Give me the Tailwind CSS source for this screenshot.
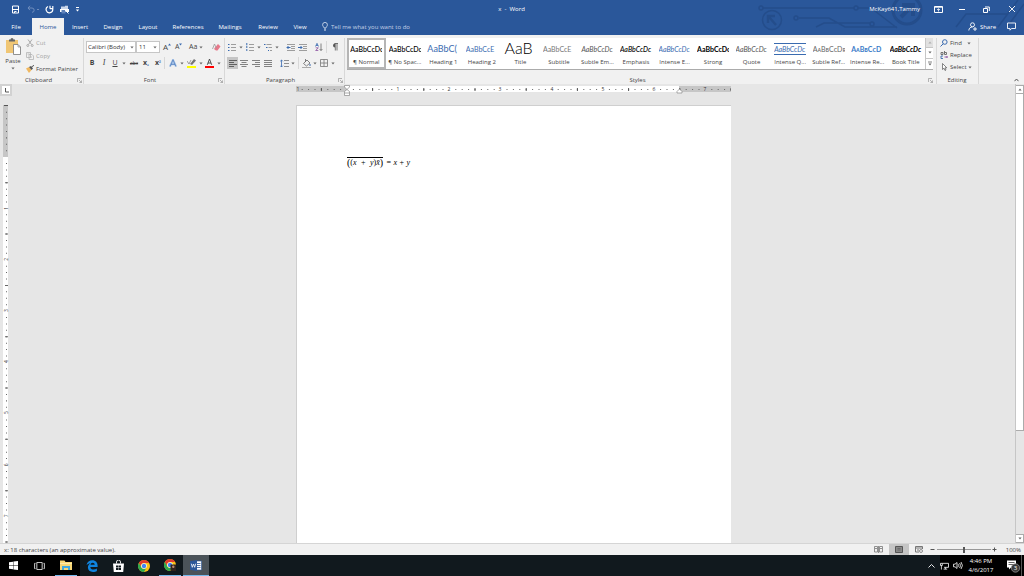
<!DOCTYPE html>
<html lang="en">
<head>
    <meta charset="UTF-8">
    <meta name="viewport" content="width=device-width, initial-scale=1.0">
    <title>x - Word</title>
    <script src="https://cdn.jsdelivr.net/npm/@tailwindcss/browser@4"></script>
</head>
<body class="h-screen flex flex-col overflow-hidden bg-[#e6e6e6] text-[#444] text-[6px] leading-[8px] font-['Open_Sans','Noto_Sans',sans-serif]">
    <!-- shared icons -->
    <svg class="hidden">
        <symbol id="caret" viewBox="0 0 4 3"><path d="M0.4 0.6h3.2L2 2.4z" fill="#666"/></symbol>
        <symbol id="launcher" viewBox="0 0 5 5"><path d="M0.5 4V0.5H4M2 2l2.4 2.4M4.5 2.4v2.1H2.4" fill="none" stroke="#888" stroke-width=".6"/></symbol>
        <symbol id="chrome" viewBox="0 0 12 12">
            <circle cx="6" cy="6" r="6" fill="#fbc116"/>
            <path d="M.8 3A6 6 0 0 1 11.2 3H6a3 3 0 0 0-2.6 4.5z" fill="#e33b2e"/>
            <path d="M.8 3A6 6 0 0 0 6 12l2.6-4.5A3 3 0 0 1 3.4 7.5z" fill="#2da94f"/>
            <circle cx="6" cy="6" r="2.8" fill="#fff"/><circle cx="6" cy="6" r="2.2" fill="#4285f4"/>
        </symbol>
    </svg>

    <header class="relative bg-[#2a579a] text-white">
        <svg class="absolute right-0 top-0 w-[266px] h-[35px]" viewBox="758 0 266 35" fill="none" stroke="#244d8b" stroke-width="1.5">
            <path d="M763 8h91M858 8h13l26 20M799 18h30l16 9h52M816 27l8-4h46"/>
            <circle cx="761" cy="8" r="2"/><circle cx="856" cy="8" r="2"/><circle cx="796" cy="18" r="2"/><circle cx="872" cy="24" r="2"/>
            <circle cx="772" cy="20" r="9.5"/><path d="M776 25l-7-8M768 23v-7h7" stroke-width="2.4"/>
            <circle cx="907" cy="10" r="14" stroke-width="3"/><path d="M901 17l10-10M902 5h11v11" stroke-width="4"/>
            <path d="M956 27l10-13h42M998 27l20-27M1007 27l17-23"/>
        </svg>
        <div class="relative flex items-center h-[18px]">
            <div class="flex flex-1 items-center pl-[11px] gap-[6px]">
                <button aria-label="Save" class="w-3"><svg class="size-[9px]" viewBox="0 0 9 9" fill="none" stroke="#fff"><path d="M1.5 1h6v7h-6zM1.5 4.5h6M3.5 8V6.500h2"/></svg></button>
                <button aria-label="Undo" class="flex items-center gap-[2px] -ml-[2px]"><svg class="size-[8px]" viewBox="0 0 8 8" fill="none" stroke="#6f8dbd"><path d="M3 .8L1 3l2 2.200M1 3h4a2 2 0 0 1 0 4.300"/></svg><span class="w-[2px] h-px bg-[#6f8dbd]"></span></button>
                <button aria-label="Repeat"><svg class="size-[9px]" viewBox="0 0 9 9" fill="none" stroke="#fff" stroke-width="1.2"><path d="M3 1.500A3.300 3.300 0 1 0 7.700 4M5 .8v3M5 3.600h2.800V1"/></svg></button>
                <button aria-label="Quick print"><svg class="size-[9px]" viewBox="0 0 9 9"><path d="M1 1.500h4V4H1zM5 0.800h3V4H5z" fill="#c9d6ea"/><path d="M0 4h9v3H0z" fill="#fff"/><path d="M1.500 5h4v3.500h-4z" fill="#5f82ba"/><path d="M5 5l3.500 3.500" stroke="#fff"/></svg></button>
                <button aria-label="Customize toolbar"><svg class="w-[5px] h-[7px]" viewBox="0 0 5 7"><path d="M1 1.500h3" stroke="#fff"/><path d="M.8 3.500h3.400L2.500 5.400z" fill="#fff"/></svg></button>
            </div>
            <h1 class="-ml-1">x&nbsp; -&nbsp; Word</h1>
            <div class="flex flex-1 items-center justify-end pr-2">
                <span class="mr-[14px]">McKay641,Tammy</span>
                <button aria-label="Ribbon options" class="mr-4"><svg class="w-[9px] h-[7px]" viewBox="0 0 9 7"><path d="M.5 .5h8v6h-8z" fill="none" stroke="#fff"/><path d="M.5 1.200h8" stroke="#fff"/><path d="M4.500 5.500V3M3 4l1.500-1.300L6 4" fill="none" stroke="#fff" stroke-width=".8"/></svg></button>
                <button aria-label="Minimize" class="mr-[18px]"><svg class="w-[6px] h-[7px]" viewBox="0 0 6 7"><path d="M0 3.500h6" stroke="#fff"/></svg></button>
                <button aria-label="Restore" class="mr-[18px]"><svg class="w-[7px] h-[7px]" viewBox="0 0 7 7" fill="none" stroke="#fff"><path d="M.5 2.500h4v4h-4zM2 1h4.300v4"/></svg></button>
                <button aria-label="Close"><svg class="w-[8px] h-[8px]" viewBox="0 0 8 8"><path d="M1 1l6 6M7 1L1 7" stroke="#fff" stroke-width=".9"/></svg></button>
            </div>
        </div>
        <nav class="relative flex items-stretch h-[17px] text-center">
            <button class="w-8">File</button>
            <button class="w-8 bg-[#f1f1f1] text-[#2a579a]">Home</button>
            <button class="w-8">Insert</button>
            <button class="w-[34px]">Design</button>
            <button class="w-9">Layout</button>
            <button class="w-11">References</button>
            <button class="w-10">Mailings</button>
            <button class="w-9">Review</button>
            <button class="w-7">View</button>
            <label class="flex items-center pl-2 gap-[3px]">
                <svg class="w-[6px] h-[9px]" viewBox="0 0 6 9" fill="none" stroke="#dde6f3" stroke-width=".8"><path d="M2 6C2 4.800.6 4.400.6 2.800a2.400 2.400 0 0 1 4.800 0C5.400 4.400 4 4.800 4 6zM2 7.200h2M2.300 8.400h1.400"/></svg>
                <input class="w-24 text-white placeholder:text-[#c3d0e5] outline-none" type="text" aria-label="Tell me" placeholder="Tell me what you want to do">
            </label>
            <div class="flex flex-1 items-center justify-end pr-2">
                <button class="flex items-center gap-[3px] mr-[11px]"><svg class="size-[9px]" viewBox="0 0 9 9" fill="none" stroke="#fff" stroke-width=".9"><circle cx="4.500" cy="2.800" r="2"/><path d="M.8 8.500C1 6 2.500 5 4.500 5M5 7h4M7 5v4"/></svg>Share</button>
                <button aria-label="Comments"><svg class="size-[9px]" viewBox="0 0 9 9" fill="none" stroke="#fff" stroke-width=".9"><path d="M.5 1h8v5.500h-4L3 8.200V6.500H.5z"/></svg></button>
            </div>
        </nav>
    </header>

    <!-- ribbon -->
    <section class="flex h-[49px] bg-[#f1f1f1] pt-[3px]">
        <div class="flex flex-col w-[84px] border-r border-[#d8d8d8]">
            <div class="flex flex-1">
                <button class="flex flex-col items-center w-[26px]">
                    <svg class="w-[15px] h-[17px]" viewBox="0 0 15 17"><path d="M0 2h12v13H0z" fill="#f0c674"/><path d="M3 3.500V1.500h1.500a1.500 1.500 0 0 1 3 0H9v2z" fill="#666"/><path d="M7.500 6.500h4.500l2.500 2.500v7.500h-7z" fill="#fff" stroke="#777" stroke-width=".8"/><path d="M12 6.500V9h2.500" fill="none" stroke="#777" stroke-width=".6"/></svg>
                    <span class="mt-[2px]">Paste</span>
                    <svg class="w-1 h-[3px] mt-[2px]"><use href="#caret"/></svg>
                </button>
                <div class="flex flex-col justify-between pt-px pb-[3px]">
                    <button class="flex items-center gap-[2px] text-[#a5a5a5]"><svg class="size-[8px]" viewBox="0 0 8 8" fill="none" stroke="#aaa"><path d="M2 .5l3.500 5M6 .5L2.500 5.500"/><circle cx="1.800" cy="6.500" r="1"/><circle cx="6.200" cy="6.500" r="1"/></svg>Cut</button>
                    <button class="flex items-center gap-[2px] text-[#a5a5a5]"><svg class="size-[8px]" viewBox="0 0 8 8" fill="#f1f1f1" stroke="#b5b5b5" stroke-width=".8"><path d="M.5 .5h4v5h-4zM3 2.500h3l1.500 1.500v3.500H3zM1.500 2h2M4 5h2"/></svg>Copy</button>
                    <button class="flex items-center gap-[2px]"><svg class="size-[8px]" viewBox="0 0 8 8"><path d="M0 3.500L3 2l2.500 3L3 8z" fill="#f0b860"/><path d="M3 2l2-1 2 2.500-1.500 1.500z" fill="#555"/><path d="M5.500 2L8 .3" stroke="#555"/></svg>Format Painter</button>
                </div>
            </div>
            <div class="flex items-center"><span class="flex-1 text-center">Clipboard</span><button aria-label="Clipboard settings" class="pr-[1px]"><svg class="size-[5px]"><use href="#launcher"/></svg></button></div>
        </div>

        <div class="flex flex-col w-[141px] border-r border-[#d8d8d8] pl-[2px]">
            <div class="flex items-center h-[18px]">
                <label class="relative flex"><select aria-label="Font" class="appearance-none w-[50px] h-3 bg-white border border-[#c6c6c6] pl-px text-[#333]"><option>Calibri (Body)</option></select><svg class="absolute right-[2px] top-[5px] w-1 h-[3px]"><use href="#caret"/></svg></label>
                <label class="relative flex"><select aria-label="Font size" class="appearance-none w-6 h-3 bg-white border border-[#c6c6c6] pl-[2px] text-[#333]"><option>11</option></select><svg class="absolute right-[3px] top-[5px] w-1 h-[3px]"><use href="#caret"/></svg></label>
                <button aria-label="Grow font" class="flex w-3 ml-[3px] text-[8px]">A<svg class="size-[3px]" viewBox="0 0 3 3"><path d="M0 2.500L1.500.5 3 2.500z" fill="#3a6bb0"/></svg></button>
                <button aria-label="Shrink font" class="flex items-end w-3 text-[7px]">A<svg class="size-[3px] self-start" viewBox="0 0 3 3"><path d="M0 .5h3L1.500 2.500z" fill="#3a6bb0"/></svg></button>
                <button aria-label="Change case" class="flex items-center gap-[2px] ml-[2px] w-[23px] text-[7px]">Aa<svg class="w-1 h-[3px]"><use href="#caret"/></svg></button>
                <button aria-label="Clear formatting"><svg class="w-[9px] h-[9px]" viewBox="0 0 9 9"><path d="M3 4.500L6 1l2.500 2.500-3 4H4L2 6z" fill="#e8788a"/><path d="M.5 6L2.500 1l2 4.500" stroke="#999" fill="none" stroke-width=".8"/></svg></button>
            </div>
            <div class="flex items-center h-[14px]">
                <button class="w-3 font-bold text-[7px]">B</button>
                <button class="w-3 italic text-[8px] font-['Liberation_Serif',serif]">I</button>
                <button class="w-[10px] underline text-[7px]">U</button>
                <button aria-label="Underline styles" class="flex w-2 justify-center"><svg class="w-1 h-[3px]"><use href="#caret"/></svg></button>
                <button class="w-3 line-through text-[5px]">abc</button>
                <button aria-label="Subscript" class="w-3 font-bold text-[7px]">x<span class="text-[5px] text-[#3a6bb0]">₂</span></button>
                <button aria-label="Superscript" class="w-3 font-bold text-[7px]">x<span class="text-[5px] text-[#3a6bb0]">²</span></button>
                <span class="w-px h-3 bg-[#d8d8d8] mr-1"></span>
                <button aria-label="Text effects" class="flex items-center gap-[3px] w-[18px]"><svg class="size-[8px]" viewBox="0 0 8 8" fill="none"><path d="M1 7.500L4 .8l3 6.700M2 5.300h4" stroke="#a9c5ea" stroke-width="2"/><path d="M1 7.500L4 .8l3 6.700M2 5.300h4" stroke="#3a6bb0" stroke-width=".6"/></svg><svg class="w-1 h-[3px]"><use href="#caret"/></svg></button>
                <button aria-label="Highlight" class="flex items-center gap-[3px] w-[18px]"><svg class="w-[9px] h-[10px]" viewBox="0 0 9 10"><path d="M0 8h9v2H0z" fill="#ff0"/><path d="M3 6l4-5 2 1.500-4 4.500z" fill="#777"/><path d="M0 3l2 3 2-4" fill="none" stroke="#777" stroke-width=".7"/></svg><svg class="w-1 h-[3px]"><use href="#caret"/></svg></button>
                <button aria-label="Font color" class="flex items-center gap-[3px]"><svg class="w-[9px] h-[10px]" viewBox="0 0 9 10"><path d="M0 8h9v2H0z" fill="red"/><path d="M2.300 6.800L4.500 1l2.200 5.800M3 5h3" fill="none" stroke="#444" stroke-width=".9"/></svg><svg class="w-1 h-[3px]"><use href="#caret"/></svg></button>
            </div>
            <div class="flex items-center mt-auto"><span class="flex-1 text-center pr-1">Font</span><button aria-label="Font settings" class="pr-[1px]"><svg class="size-[5px]"><use href="#launcher"/></svg></button></div>
        </div>

        <div class="flex flex-col w-[120px] border-r border-[#d8d8d8] pl-[2px]">
            <div class="flex items-center h-[18px] pl-px">
                <button aria-label="Bullets" class="flex items-center gap-[3px] w-[18px]"><svg class="size-[8px]" viewBox="0 0 8 8"><path d="M0 1.500h1.500M0 4.500h1.500M0 7.500h1.500" stroke="#3a6bb0"/><path d="M3 1.500h5M3 4.500h5M3 7.500h5" stroke="#888" stroke-width=".8"/></svg><svg class="w-1 h-[3px]"><use href="#caret"/></svg></button>
                <button aria-label="Numbering" class="flex items-center gap-[3px] w-[18px]"><svg class="size-[8px]" viewBox="0 0 8 8"><path d="M.8 0v2.300M.8 3v2M.8 6v2" stroke="#3a6bb0"/><path d="M3 1.500h5M3 4.500h5M3 7.500h5" stroke="#888" stroke-width=".8"/></svg><svg class="w-1 h-[3px]"><use href="#caret"/></svg></button>
                <button aria-label="Multilevel list" class="flex items-center gap-[3px] w-[22px]"><svg class="size-[8px]" viewBox="0 0 8 8"><path d="M0 1.500h1.500M2 4.500h1.500M4 7.500h1" stroke="#3a6bb0"/><path d="M2.500 1.500h5M4.500 4.500H8M6 7.500h2" stroke="#888" stroke-width=".8"/></svg><svg class="w-1 h-[3px]"><use href="#caret"/></svg></button>
                <button aria-label="Decrease indent" class="w-3"><svg class="w-[9px] h-[8px]" viewBox="0 0 9 8"><path d="M1 1.500h8M5 3.500h4M5 5.500h4M1 7.500h8" stroke="#888" stroke-width=".8"/><path d="M4.500 4.500H1M2.500 3L1 4.500 2.500 6" fill="none" stroke="#3a6bb0"/></svg></button>
                <button aria-label="Increase indent" class="w-[17px]"><svg class="w-[9px] h-[8px]" viewBox="0 0 9 8"><path d="M1 1.500h8M5 3.500h4M5 5.500h4M1 7.500h8" stroke="#888" stroke-width=".8"/><path d="M0 4.500h4M2.500 3L4 4.500 2.500 6" fill="none" stroke="#3a6bb0"/></svg></button>
                <button aria-label="Sort" class="w-[11px]"><svg class="size-[8px]" viewBox="0 0 8 8" fill="none" stroke-width=".8"><path d="M.5 3.500L2 .3l1.500 3.200M1 2.500h2" stroke="#3a6bb0"/><path d="M.7 4.800h2.600L.7 7.500h2.600" stroke="#8a4fa0"/><path d="M6 .5v7M4.600 6L6 7.500 7.400 6" stroke="#666"/></svg></button>
                <span class="w-px h-3 bg-[#d8d8d8] mr-[5px]"></span>
                <button aria-label="Show marks"><svg class="w-[6px] h-[8px]" viewBox="0 0 6 8"><path d="M3 .5a2 2 0 0 0 0 4z" fill="#555"/><path d="M2.500 .5H6M3.300 .5v7M5 .5v7" stroke="#555" stroke-width=".8"/></svg></button>
            </div>
            <div class="flex items-center h-[14px]">
                <button aria-label="Align left" class="grid place-items-center w-[11px] h-3 bg-[#c5c5c5]"><svg class="size-[8px]" viewBox="0 0 8 8" stroke="#555" stroke-width=".9"><path d="M0 1.500h8M0 3.500h5M0 5.500h8M0 7.500h5"/></svg></button>
                <button aria-label="Center" class="grid place-items-center w-3 h-3"><svg class="size-[8px]" viewBox="0 0 8 8" stroke="#666" stroke-width=".8"><path d="M0 1.500h8M1.500 3.500h5M0 5.500h8M1.500 7.500h5"/></svg></button>
                <button aria-label="Align right" class="grid place-items-center w-3 h-3"><svg class="size-[8px]" viewBox="0 0 8 8" stroke="#666" stroke-width=".8"><path d="M0 1.500h8M3 3.500h5M0 5.500h8M3 7.500h5"/></svg></button>
                <button aria-label="Justify" class="grid place-items-center w-3 h-3"><svg class="size-[8px]" viewBox="0 0 8 8" stroke="#666" stroke-width=".8"><path d="M0 1.500h8M0 3.500h8M0 5.500h8M0 7.500h8"/></svg></button>
                <button aria-label="Line spacing" class="flex items-center gap-[2px] ml-[6px] w-[18px]"><svg class="size-[9px]" viewBox="0 0 9 9" fill="none"><path d="M4 1.500h5M4 4.500h5M4 7.500h5" stroke="#777" stroke-width=".8"/><path d="M1.500 1v7M.2 2.300L1.500 1l1.300 1.300M.2 6.700L1.500 8l1.300-1.300" stroke="#3a6bb0" stroke-width=".8"/></svg><svg class="w-1 h-[3px]"><use href="#caret"/></svg></button>
                <span class="w-px h-3 bg-[#d8d8d8] mr-[3px]"></span>
                <button aria-label="Shading" class="flex items-center gap-[2px] w-[18px]"><svg class="size-[9px]" viewBox="0 0 9 9" fill="none"><path d="M1.500 4.500L5 1l3 3-3.500 3zM3.500 0v3" stroke="#666" stroke-width=".8"/><path d="M8 5v2" stroke="#3a6bb0"/><path d="M0 8.500h9" stroke="#aaa"/></svg><svg class="w-1 h-[3px]"><use href="#caret"/></svg></button>
                <button aria-label="Borders" class="flex items-center gap-[3px]"><svg class="size-[8px]" viewBox="0 0 8 8" fill="none" stroke="#777" stroke-width=".8"><path d="M.5 .5h7v7h-7zM4 .5v7M.5 4h7"/></svg><svg class="w-1 h-[3px]"><use href="#caret"/></svg></button>
            </div>
            <div class="flex items-center mt-auto"><span class="flex-1 text-center pr-1">Paragraph</span><button aria-label="Paragraph settings" class="pr-[1px]"><svg class="size-[5px]"><use href="#launcher"/></svg></button></div>
        </div>

        <div class="flex flex-col flex-1 min-w-0 border-r border-[#d8d8d8] pl-[2px] pr-[3px]">
            <div class="flex h-8 bg-white border-b border-[#ababab]">
                <div class="grid grid-cols-[repeat(15,minmax(0,1fr))] flex-1 [&>button]:flex [&>button]:flex-col [&>button]:items-center [&>button]:overflow-hidden [&>button]:whitespace-nowrap [&_b]:flex [&_b]:items-center [&_b]:w-8 [&_b]:h-5 [&_b]:pt-[2px] [&_b]:overflow-hidden [&_b]:font-['Lato',sans-serif] [&_b]:text-[7px]">
                    <button class="outline-2 -outline-offset-2 outline-[#b5b5b5]"><b class="font-medium text-black">AaBbCcDc</b><span>¶ Normal</span></button>
                    <button><b class="font-medium text-black">AaBbCcDc</b><span>¶ No Spac...</span></button>
                    <button><b class="font-normal text-[#3a6bb0] text-[9px]!">AaBbC(</b><span>Heading 1</span></button>
                    <button><b class="font-normal text-[#3a6bb0]">AaBbCcE</b><span>Heading 2</span></button>
                    <button><b class="font-light text-black text-[16px]! pt-0! leading-[18px]">AaB</b><span>Title</span></button>
                    <button><b class="font-normal text-[#777]">AaBbCcE</b><span>Subtitle</span></button>
                    <button><b class="font-normal italic text-[#555]">AaBbCcDc</b><span>Subtle Em...</span></button>
                    <button><b class="font-medium italic text-black">AaBbCcDc</b><span>Emphasis</span></button>
                    <button><b class="font-normal italic text-[#3a6bb0]">AaBbCcDc</b><span>Intense E...</span></button>
                    <button><b class="text-black">AaBbCcDc</b><span>Strong</span></button>
                    <button><b class="font-normal italic text-[#555]">AaBbCcDc</b><span>Quote</span></button>
                    <button><b class="font-normal italic text-[#3a6bb0] h-3! pt-0! mt-[5px] mb-[3px] border-y border-[#3a6bb0]">AaBbCcDc</b><span>Intense Q...</span></button>
                    <button><b class="font-normal text-[#666]">AᴀBʙCᴄDʀ</b><span>Subtle Ref...</span></button>
                    <button><b class="font-bold text-[#3a7bc8]">AᴀBʙCᴄD</b><span>Intense Re...</span></button>
                    <button><b class="font-bold italic text-black">AaBbCcDc</b><span>Book Title</span></button>
                </div>
                <div class="grid grid-rows-3 w-2 border-l border-[#c6c6c6] divide-y divide-[#c6c6c6] [&>button]:grid [&>button]:place-items-center">
                    <button aria-label="Scroll up" class="bg-[#e1e1e1]"><svg class="w-1 h-[3px] rotate-180 opacity-40"><use href="#caret"/></svg></button>
                    <button aria-label="Scroll down"><svg class="w-1 h-[3px]"><use href="#caret"/></svg></button>
                    <button aria-label="More styles"><svg class="w-1 h-[5px]" viewBox="0 0 4 5"><path d="M0 1h4" stroke="#666" stroke-width=".8"/><path d="M.4 2.400h3.200L2 4.400z" fill="#666"/></svg></button>
                </div>
            </div>
            <div class="flex items-center mt-auto"><span class="flex-1 text-center">Styles</span><button aria-label="Styles settings"><svg class="size-[5px]"><use href="#launcher"/></svg></button></div>
        </div>

        <div class="flex flex-col w-[42px] border-r border-[#d8d8d8] pl-[3px] pt-px">
            <button class="flex items-center gap-[2px] h-2"><svg class="size-[8px]" viewBox="0 0 8 8" fill="none" stroke="#3a6bb0"><circle cx="4.800" cy="3" r="2.300"/><path d="M3.200 4.800L.5 7.500"/></svg>Find<svg class="w-1 h-[3px] ml-[3px]"><use href="#caret"/></svg></button>
            <button class="flex items-center gap-[2px] h-2 mt-1"><svg class="size-[8px]" viewBox="0 0 8 8" fill="none" stroke-width=".9"><path d="M1 1.500h2v2H1zM4.500 0v3.500h2v-2h-2" stroke="#666"/><path d="M3 5H1v2.500h2M.5 4.500" stroke="#3a6bb0"/><path d="M4.500 6h3M6.500 5l1 1-1 1" stroke="#8a4fa0"/></svg>Replace</button>
            <button class="flex items-center gap-[2px] h-2 mt-1"><svg class="size-[8px]" viewBox="0 0 8 8"><path d="M2.500 .5v6L4 5.200l1 2.300 1-.5-1-2.200h1.800z" fill="#fff" stroke="#555" stroke-width=".7"/></svg>Select<svg class="w-1 h-[3px] -ml-px"><use href="#caret"/></svg></button>
            <span class="mt-auto text-center pr-1">Editing</span>
        </div>
        <div class="flex w-[45px] items-end justify-end pr-[5px]">
            <button aria-label="Collapse ribbon"><svg class="w-[5px] h-[8px]" viewBox="0 0 5 8"><path d="M.5 5.200L2.500 3l2 2.200" fill="none" stroke="#555"/></svg></button>
        </div>
    </section>

    <!-- document area -->
    <main class="flex flex-1 min-h-0">
        <div class="flex flex-col w-3 overflow-hidden">
            <button aria-label="Tab stop" class="grid place-items-center w-3 h-3 bg-white border-2 border-[#d2d2d2]"><svg class="size-[5px]" viewBox="0 0 5 5"><path d="M1.500 0v4H5" fill="none" stroke="#555"/></svg></button>
            <!-- 51.2 units to the inch, seven eighth-inch dots between numbers -->
            <svg class="w-[6px] ml-[3px] mt-[9px] flex-1 min-h-0" viewBox="3 106 6 437" preserveAspectRatio="xMinYMin slice">
                <path d="M3 106h5v52H3z" fill="#c6c6c6"/><path d="M3 158h5v700H3z" fill="#fff"/>
                <path d="M6.500 112.700V858" stroke="#666" stroke-dasharray="1 5.400 1 5.400 1 5.400 1 5.400 1 5.400 1 5.400 1 11.800"/>
                <path d="M6.500 183.100V858" stroke="#666" stroke-width="3" stroke-dasharray="1 50.200"/>
                <path d="M4 106.500h4" stroke="#555"/>
                <g fill="#333" font-size="5" text-anchor="middle">
                    <text transform="translate(8 209) rotate(-90)">1</text>
                    <text transform="translate(8 260) rotate(-90)">2</text>
                    <text transform="translate(8 311) rotate(-90)">3</text>
                    <text transform="translate(8 362) rotate(-90)">4</text>
                    <text transform="translate(8 413) rotate(-90)">5</text>
                    <text transform="translate(8 465) rotate(-90)">6</text>
                    <text transform="translate(8 516) rotate(-90)">7</text>
                </g>
            </svg>
        </div>
        <div class="flex flex-1 flex-col items-center min-w-0">
            <svg class="w-[435px] h-[12px] mt-px mb-2 shrink-0" viewBox="296 86 435 12">
                <path d="M296 87h51v6h-51zM679 87h52v6h-52z" fill="#c6c6c6"/><path d="M347 87h332v6H347z" fill="#fff"/>
                <path d="M301.700 90.500H731" stroke="#666" stroke-dasharray="1 5.400 1 5.400 1 5.400 1 5.400 1 5.400 1 5.400 1 11.800"/>
                <path d="M320.900 90.500H731" stroke="#555" stroke-width="3" stroke-dasharray="1 50.200"/>
                <g fill="#333" font-size="5" text-anchor="middle">
                    <text x="298" y="92">1</text><text x="398" y="92">1</text><text x="449" y="92">2</text><text x="500" y="92">3</text><text x="552" y="92">4</text><text x="603" y="92">5</text><text x="654" y="92">6</text><text x="705" y="92">7</text>
                </g>
                <path d="M344.500 86.500h5V88L347 90.500 344.500 88zM347 90.500l2.500 2v4h-5v-4zM344.500 94h5M679.500 90l2.500 2.500v1.500h-5v-1.500z" fill="#fff" stroke="#888" stroke-width=".7"/>
            </svg>
            <article class="w-[435px] flex-1 bg-white border-t border-l border-[#cfcfcf] pl-[50px] pt-[51px] text-black text-[8px] leading-[10px] font-['Liberation_Serif',serif]">
                <p class="flex gap-[3px] italic"><span class="flex border-t border-black"><span class="not-italic text-[10px]">(</span><span class="not-italic">(</span>x&ensp;+&ensp;y<span class="not-italic">)</span>x̄<span class="not-italic text-[10px]">)</span></span><span class="pt-px">= x + y</span></p>
            </article>
        </div>
        <div class="flex flex-col w-[9px] pt-px bg-[#e6e6e6] border-l border-[#c6c6c6]">
            <button aria-label="Page up" class="grid place-items-center h-[9px] bg-white border-y border-r border-[#ababab]"><svg class="w-1 h-[3px] rotate-180"><use href="#caret"/></svg></button>
            <div class="basis-[337px] bg-white border-b border-r border-[#ababab]"></div>
            <button aria-label="Page down" class="grid place-items-center h-[9px] mt-auto bg-white border-y border-r border-[#ababab]"><svg class="w-1 h-[3px]"><use href="#caret"/></svg></button>
        </div>
    </main>

    <footer class="flex items-center h-[12px] bg-[#f1f1f1] border-t border-[#d5d5d5] pl-1">
        <span>x: 18 characters (an approximate value).</span>
        <div class="flex items-center self-stretch ml-auto pr-[3px]">
            <button aria-label="Read mode" class="w-[15px]"><svg class="w-[9px] h-[7px]" viewBox="0 0 9 7" fill="none" stroke="#777" stroke-width=".8"><path d="M.5 .5h3v5.500h-3zM5.500 .5h3v5.500h-3zM4.500 0v7M1 2.500h2M6 2.500h2"/></svg></button>
            <button aria-label="Print layout" class="grid place-items-center w-5 self-stretch bg-[#c5c5c5]"><svg class="w-[8px] h-[7px]" viewBox="0 0 8 7"><path d="M.5 .5h7v6h-7z" fill="#888" stroke="#555"/><path d="M2.500 2.500h3M2.500 4h3" stroke="#555" stroke-width=".6"/></svg></button>
            <button aria-label="Web layout" class="w-[20px] flex justify-center"><svg class="w-[8px] h-[7px]" viewBox="0 0 8 7" fill="none" stroke="#777"><path d="M4 6H.5V.5h7V3M.5 2h7M2 4h2"/><circle cx="6" cy="5" r="1.500" stroke-width=".8"/></svg></button>
            <button aria-label="Zoom out" class="w-2"><svg class="w-[5px] h-[5px] mx-auto" viewBox="0 0 5 5"><path d="M.5 2.500h4" stroke="#555"/></svg></button>
            <input type="range" aria-label="Zoom" value="50" class="appearance-none w-[54px] h-px bg-[#999] [&::-webkit-slider-thumb]:appearance-none [&::-webkit-slider-thumb]:w-[2px] [&::-webkit-slider-thumb]:h-[6px] [&::-webkit-slider-thumb]:bg-[#555]">
            <button aria-label="Zoom in" class="w-2"><svg class="w-[5px] h-[5px] mx-auto" viewBox="0 0 5 5"><path d="M.5 2.500h4M2.500 .5v4" stroke="#555"/></svg></button>
            <span class="pl-[7px]">100%</span>
        </div>
    </footer>

    <!-- taskbar -->
    <div class="flex h-[21px] bg-[#11191e] text-white">
        <div class="flex bg-black w-20 [&>button]:grid [&>button]:place-items-center">
            <button aria-label="Start" class="w-[26px]"><svg class="size-[9px]" viewBox="0 0 9 9" fill="#fff"><path d="M0 1.300l4-.6V4.300H0zM4.400.6L9 0v4.300H4.400zM0 4.700h4v3.600l-4-.6zM4.400 4.700H9V9l-4.600-.6z"/></svg></button>
            <button aria-label="Task view" class="w-[26px]"><svg class="w-[11px] h-[8px]" viewBox="0 0 12 9" fill="none" stroke="#fff" stroke-width=".9"><path d="M3 .5h6v8H3zM1.500 1.500h-1v6h1M10.500 1.500h1v6h-1"/></svg></button>
            <button aria-label="File Explorer" class="w-[22px] ml-[3px] border-b border-[#76b9ed]"><svg class="w-[12px] h-[10px]" viewBox="0 0 12 10"><path d="M0 .5h4.500l1 1.500H12v8H0z" fill="#f8d775"/><path d="M0 3h12v1H0z" fill="#fdeaa8"/><path d="M2 10V6h8v4H8V8H4v2z" fill="#3fa9e0"/></svg></button>
        </div>
        <div class="flex [&>button]:grid [&>button]:place-items-center [&>button]:w-[26px]">
            <button aria-label="Edge" class="-ml-px"><svg class="size-[12px]" viewBox="0 0 12 12"><path d="M.5 5.300C1 1.800 3.500.2 6.300.2c3.500 0 5.300 2.500 5.300 5.300v1.400H4.300c.1 1.800 1.600 2.600 3.300 2.600 1.300 0 2.400-.4 3.300-.9v2.300c-1 .6-2.300 1-4 1C4 11.900 1.900 10.300 1.900 7.600c0-1.900 1-3.400 2.600-4.300-1.900.2-3.200 1-4 2zM4.500 4.800h4.200c0-1.300-.8-2-2-2-1.200 0-2 .8-2.200 2z" fill="#0f84e0"/></svg></button>
            <button aria-label="Store"><svg class="w-[11px] h-[12px]" viewBox="0 0 11 12"><path d="M3.500 3.500V2a1.500 1.500 0 0 1 4 0v1.500" fill="none" stroke="#fff" stroke-width=".9"/><path d="M0 3.500h11l-.8 8.500H.8z" fill="#fff"/><path d="M3 5.500h2.300v2H3zM5.700 5.500H8v2H5.700zM3 8h2.300v2H3zM5.700 8H8v2H5.700z" fill="#11191e"/></svg></button>
            <button aria-label="Chrome"><svg class="size-[12px]"><use href="#chrome"/></svg></button>
            <button aria-label="Chrome profile" class="w-[22px]! mx-[2px] border-b border-[#76b9ed]"><svg class="size-[12px]" viewBox="0 0 12 12"><use href="#chrome"/><path d="M6.500 5.500H12V12H6.500z" fill="#30221d"/><circle cx="9.300" cy="7.800" r="1.200" fill="#b88a72"/></svg></button>
            <button aria-label="Word" class="bg-[#4b5359] border-b border-[#76b9ed]"><svg class="w-[12px] h-[11px]" viewBox="0 0 12 11"><path d="M6 1h5.500v9H6z" fill="#fff" stroke="#2b579a" stroke-width=".6"/><path d="M7 3.500h3.500M7 5.500h3.500M7 7.500h3.500" stroke="#2b579a" stroke-width=".8"/><path d="M0 1.200L7 0v11L0 9.800z" fill="#2b579a"/><path d="M1.300 3.700l1 3.600 1.200-3.300 1.200 3.300 1-3.600" fill="none" stroke="#fff" stroke-width=".8"/></svg></button>
        </div>
        <div class="flex items-center ml-auto">
            <button aria-label="Hidden icons" class="pr-[5px]"><svg class="w-[7px] h-[6px]" viewBox="0 0 7 6"><path d="M.5 4.500l3-3 3 3" fill="none" stroke="#fff" stroke-width=".9"/></svg></button>
            <div class="flex items-center self-stretch bg-black">
                <svg class="w-[9px] h-[8px]" viewBox="0 0 10 9" fill="none" stroke="#fff" stroke-width=".9"><path d="M2.500 1.500h7v4.500h-5M6 6v2M4 8h4M.5 1.500h2v2.500h-2zM1.500 4v4.500"/></svg>
                <svg class="w-[10px] h-[9px] ml-1" viewBox="0 0 10 9" fill="none" stroke="#fff" stroke-width=".8"><path d="M.5 3.200H2L4 1.500v6L2 5.800H.5zM5.200 3.200a2 2 0 0 1 0 2.600M6.600 2a4 4 0 0 1 0 5M8 1a5.500 5.500 0 0 1 0 7"/></svg>
                <time class="w-9 text-center leading-[9px]">4:46 PM<br>4/6/2017</time>
                <button aria-label="Notifications" class="ml-[7px]"><svg class="w-[15px] h-[14px]" viewBox="0 0 15 14"><path d="M1 1.500h9v7H5L3 10.500V8.500H1z" fill="#fff"/><path d="M2.500 3.500h6M2.500 5.500h6" stroke="#222" stroke-width=".7"/><circle cx="9.500" cy="9" r="4.200" fill="#3a3a3a" stroke="#999" stroke-width=".7"/><text x="9.500" y="11" font-size="6" text-anchor="middle" fill="#fff">3</text></svg></button>
                <span class="w-px self-stretch bg-[#555] mr-[2px]"></span>
            </div>
        </div>
    </div>
</body>
</html>
